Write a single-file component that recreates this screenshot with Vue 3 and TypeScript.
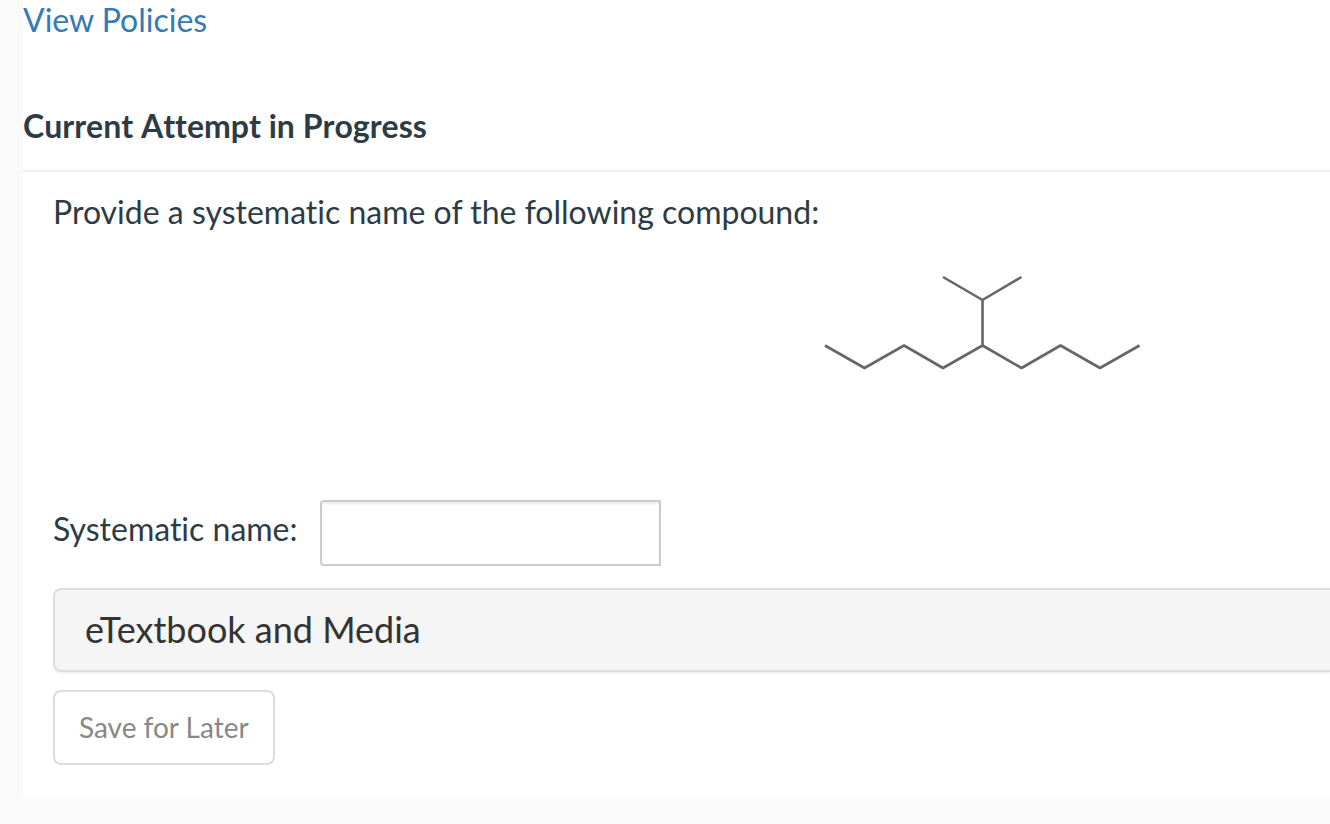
<script setup lang="ts">
import { ref } from 'vue'

const systematicName = ref('')
</script>

<template>
  <main class="page">
    <section class="panel">
      <a class="policies" href="#policies">View Policies</a>
      <h2 class="attempt">Current Attempt in Progress</h2>
      <div class="question">
        <p class="prompt">Provide a systematic name of the following compound:</p>
        <div class="figure">
          <svg width="320" height="100" viewBox="822 273 320 100" role="img" aria-label="Skeletal structure">
            <g fill="none" stroke="#666" stroke-width="2.6" stroke-linejoin="round">
              <path d="M825 345.5 L864.5 368 L904 345.5 L943 368 L982.5 345.5 L1021.5 368 L1060.5 345.5 L1100 368 L1139.5 345.5" />
              <path d="M982.5 345.5 V300 M943 277 L982.5 300 L1021.5 277" />
            </g>
          </svg>
        </div>
        <div class="answer">
          <label for="systematic-name">Systematic name:</label>
          <input id="systematic-name" v-model="systematicName" type="text" autocomplete="off" />
        </div>
        <button class="media" type="button">eTextbook and Media</button>
        <button class="save" type="button">Save for Later</button>
      </div>
    </section>
  </main>
</template>

<style>
body {
  margin: 0;
  background: #fafafa;
}
</style>

<style scoped>
.page {
  box-sizing: border-box;
  min-height: 100vh;
  padding: 0 0 24px 23px;
  background: #fafafa;
  color: #2d3b45;
  font: 32px/40px Lato, "Liberation Sans", sans-serif;
  font-variant-ligatures: none;
}
.panel {
  padding-bottom: 34px;
  background: #fff;
}
.policies {
  display: block;
  width: fit-content;
  color: #337ab7;
  text-decoration: none;
}
.attempt {
  margin: 66px 0 0;
  padding-bottom: 24px;
  border-bottom: 2px solid #eee;
  font-size: 32px;
  font-weight: 700;
  font-kerning: none;
  line-height: 40px;
}
.question {
  display: flex;
  flex-direction: column;
  align-items: flex-start;
  padding: 20px 0 0 30px;
}
.prompt {
  margin: 0;
}
.figure {
  display: flex;
  align-self: stretch;
  justify-content: flex-end;
  padding: 41px 188px 127px 0;
}
.answer {
  display: flex;
  align-items: center;
  gap: 22px;
}
.answer label {
  padding-bottom: 8px;
}
.answer input {
  box-sizing: border-box;
  width: 341px;
  height: 66px;
  padding: 8px 16px;
  border: 2px solid #ccc;
  border-radius: 4px 0 0 4px;
  background: #fff;
  box-shadow: inset 0 2px 2px rgba(0, 0, 0, 0.075);
  color: inherit;
  font: inherit;
  outline: none;
}
.media,
.save {
  border: 2px solid #ddd;
  border-radius: 8px;
  font-family: inherit;
  font-variant-ligatures: none;
  line-height: 40px;
}
.media {
  align-self: stretch;
  height: 84px;
  margin-top: 22px;
  padding: 0 30px 2px;
  border-right: 0;
  border-radius: 8px 0 0 8px;
  background: #f5f5f5;
  box-shadow: 0 2px 2px rgba(0, 0, 0, 0.05);
  color: #333;
  font-size: 36px;
  text-align: left;
}
.save {
  height: 75px;
  margin-top: 18px;
  padding: 0 24px 2px;
  background: #fff;
  color: #888;
  font-size: 28px;
}
</style>
